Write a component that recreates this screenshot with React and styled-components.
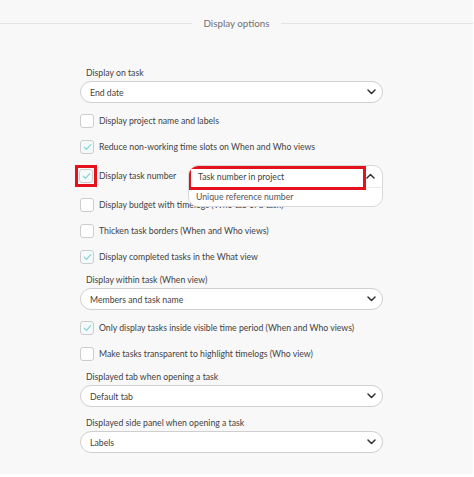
import React from "react";
import styled, { createGlobalStyle } from "styled-components";

const GlobalStyle = createGlobalStyle`
  html, body {
    margin: 0;
    padding: 0;
    background: #ffffff;
  }
  * {
    box-sizing: border-box;
  }
`;

const Chevron = ({ up }) => (
  <svg width="9" height="6" viewBox="0 0 9 6" fill="none">
    <path
      d={up ? "M1 5 L4.5 1.5 L8 5" : "M1 1 L4.5 4.5 L8 1"}
      stroke="#333"
      strokeWidth="1.5"
      strokeLinecap="round"
      strokeLinejoin="round"
    />
  </svg>
);

const Check = () => (
  <svg width="9" height="8" viewBox="0 0 9 8" fill="none">
    <path
      d="M1.2 4.2 L3.4 6.3 L7.8 1.6"
      stroke="#7fcfd3"
      strokeWidth="1.1"
      strokeLinecap="round"
      strokeLinejoin="round"
    />
  </svg>
);

const App = () => {
  return (
    <>
      <GlobalStyle />
      <Panel>
        <Header>
          <Line />
          <Title>Display options</Title>
          <Line />
        </Header>
        <Content>
          <Field label="Display on task" value="End date" />
          <Rows>
            <CheckRow label="Display project name and labels" />
            <CheckRow checked label="Reduce non-working time slots on When and Who views" />
            <TaskNumberRow>
              <Marked>
                <Box checked>
                  <Check />
                </Box>
              </Marked>
              <RowText>Display task number</RowText>
              <MenuSlot>
                <Menu>
                  <MenuTrigger>
                    <span>Task number in project</span>
                    <Chevron up />
                  </MenuTrigger>
                  <MenuOption>Unique reference number</MenuOption>
                  <Highlight />
                </Menu>
              </MenuSlot>
            </TaskNumberRow>
            <CheckRow label="Display budget with timelogs (Who tab of a task)" />
            <CheckRow label="Thicken task borders (When and Who views)" />
            <CheckRow checked label="Display completed tasks in the What view" />
          </Rows>
          <Field gap={3} label="Display within task (When view)" value="Members and task name" />
          <Rows>
            <CheckRow checked label="Only display tasks inside visible time period (When and Who views)" />
            <CheckRow label="Make tasks transparent to highlight timelogs (Who view)" />
          </Rows>
          <Field gap={3} label="Displayed tab when opening a task" value="Default tab" />
          <Field gap={9} label="Displayed side panel when opening a task" value="Labels" />
        </Content>
      </Panel>
    </>
  );
};

const Field = ({ label, value, gap }) => (
  <FieldWrap gap={gap}>
    <FieldLabel>{label}</FieldLabel>
    <Select>
      <span>{value}</span>
      <Chevron />
    </Select>
  </FieldWrap>
);

const CheckRow = ({ label, checked }) => (
  <Row>
    <Box checked={checked}>{checked && <Check />}</Box>
    <RowText>{label}</RowText>
  </Row>
);

export default App;

const Panel = styled.div`
  width: 473px;
  height: 474px;
  background: #f8f8f8;
  font-family: "Lato", "Open Sans", sans-serif;
  font-size: 8.7px;
  color: #424242;
`;

const Header = styled.div`
  height: 47px;
  display: flex;
  align-items: center;
  gap: 10px;
  padding-bottom: 1px;
`;

const Line = styled.div`
  flex: 1;
  height: 1px;
  background: #e4e4e4;
`;

const Title = styled.div`
  color: #707070;
  font-size: 9.8px;
  padding: 0 1px;
`;

const Content = styled.div`
  margin-left: 80px;
  width: 303px;
`;

const FieldWrap = styled.div`
  margin-top: ${({ gap }) => (gap !== undefined ? gap : 19)}px;
  display: flex;
  flex-direction: column;
  gap: 1px;
`;

const FieldLabel = styled.div`
  height: 14px;
  line-height: 14px;
  padding-left: 6px;
`;

const Select = styled.div`
  height: 22px;
  border: 1px solid #cfcfcf;
  border-radius: 11px;
  background: #fff;
  display: flex;
  align-items: center;
  justify-content: space-between;
  padding: 0 6px 0 9px;
`;

const Rows = styled.div`
  margin-top: 5px;
  display: flex;
  flex-direction: column;
`;

const Row = styled.div`
  height: 26px;
  display: flex;
  align-items: center;
  gap: 5px;
`;

const TaskNumberRow = styled(Row)`
  height: 32px;
  position: relative;
  z-index: 2;
`;

const Box = styled.span`
  width: 14px;
  height: 14px;
  border: 1px solid #cdcdcd;
  border-radius: 3px;
  background: ${({ checked }) => (checked ? "#f4fafa" : "#fff")};
  display: inline-flex;
  align-items: center;
  justify-content: center;
  flex-shrink: 0;
`;

const Marked = styled.span`
  display: inline-flex;
  margin: 0 -3px 0 -5px;
  padding: 1px;
  border: 3px solid #e3121c;
`;

const RowText = styled.span`
  white-space: nowrap;
  line-height: 14px;
`;

const MenuSlot = styled.div`
  position: relative;
  width: 195px;
  height: 23px;
  margin-left: auto;
`;

const Menu = styled.div`
  position: absolute;
  top: 0;
  left: 0;
  right: 0;
  background: #fff;
  border: 1px solid #d8d8d8;
  border-radius: 10px;
  overflow: hidden;
`;

const MenuTrigger = styled.div`
  height: 22px;
  display: flex;
  align-items: center;
  justify-content: space-between;
  padding: 0 7px 0 9px;
  border-bottom: 1px solid #ececec;
`;

const MenuOption = styled.div`
  height: 18px;
  display: flex;
  align-items: center;
  padding-left: 7px;
  color: #555;
`;

const Highlight = styled.div`
  position: absolute;
  top: 0;
  left: -1px;
  width: 178px;
  height: 24px;
  border: 3px solid #e3121c;
`;
